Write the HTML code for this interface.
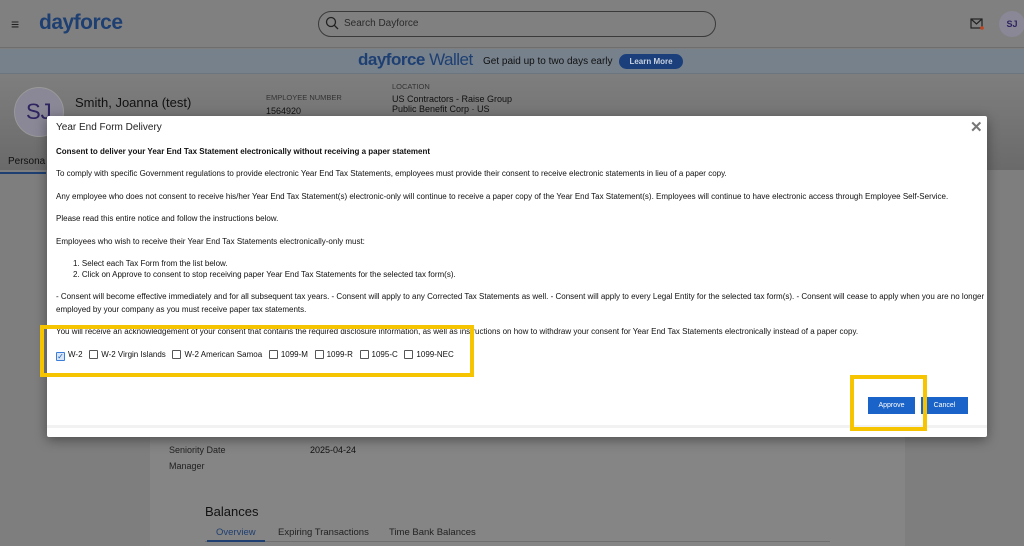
<!DOCTYPE html>
<html><head><style>
*{margin:0;padding:0;box-sizing:border-box}
body{width:1024px;height:546px;overflow:hidden;background:#7e7e7e;font-family:"Liberation Sans",sans-serif;position:relative}
.a{position:absolute;white-space:nowrap}
.m{font-size:8px;color:#111}
.cb{display:inline-block;width:9px;height:9px;border:1px solid #555;background:#fff;vertical-align:-2px;margin-right:3px;border-radius:1px}
</style></head><body>
<div class="a" style="left:0;top:0;width:1024px;height:48px;background:#808080;border-bottom:1px solid #6e6e6e"></div>
<div class="a" style="left:11px;top:16px;font-size:14px;color:#222">≡</div>
<div class="a" style="left:39px;top:11px;font-size:21px;font-weight:bold;color:#1e3f72;letter-spacing:-0.5px">dayforce</div>
<div class="a" style="left:318px;top:11px;width:398px;height:26px;border:1px solid #3a3a3a;border-radius:13px"></div>
<svg class="a" style="left:325px;top:16px" width="14" height="14" viewBox="0 0 14 14"><circle cx="6" cy="6" r="4.5" fill="none" stroke="#222" stroke-width="1.3"/><line x1="9.3" y1="9.3" x2="13" y2="13" stroke="#222" stroke-width="1.3"/></svg>
<div class="a" style="left:344px;top:18px;font-size:10px;color:#2a2a2a">Search Dayforce</div>
<svg class="a" style="left:970px;top:18px" width="14" height="12" viewBox="0 0 14 12"><rect x="1" y="1" width="11" height="9" fill="none" stroke="#222" stroke-width="1.2"/><polyline points="1,1 6.5,6 12,1" fill="none" stroke="#222" stroke-width="1.2"/><circle cx="12" cy="10" r="1.8" fill="#c0451f"/></svg>
<div class="a" style="left:999px;top:11px;width:26px;height:26px;border-radius:50%;background:#8a8796;font-size:9px;font-weight:bold;color:#2d2460;text-align:center;line-height:26px">SJ</div>
<div class="a" style="left:0;top:49px;width:1024px;height:25px;background:#76818c;border-bottom:1px solid #6a7580"></div>
<div class="a" style="left:358px;top:50px;font-size:17px;font-weight:bold;color:#1e3f72;letter-spacing:-0.5px">dayforce<span style="font-weight:normal"> Wallet</span></div>
<div class="a" style="left:483px;top:56px;font-size:10px;color:#111">Get paid up to two days early</div>
<div class="a" style="left:619px;top:54px;width:64px;height:15px;border-radius:8px;background:#1b3f7a;color:#c8d2e0;font-size:8px;font-weight:bold;text-align:center;line-height:15px">Learn More</div>
<div class="a" style="left:0;top:75px;width:1024px;height:95px;background:linear-gradient(#7e7e7e,#6a6a6a)"></div>
<div class="a" style="left:14px;top:87px;width:50px;height:50px;border-radius:50%;background:#8a8796;border:1px solid #999;font-size:22px;color:#2d2460;line-height:48px;padding-left:11px">SJ</div>
<div class="a" style="left:75px;top:95px;font-size:13px;color:#111">Smith, Joanna (test)</div>
<div class="a" style="left:266px;top:93px;font-size:7.5px;color:#333">EMPLOYEE NUMBER</div>
<div class="a" style="left:266px;top:106px;font-size:9px;color:#111">1564920</div>
<div class="a" style="left:392px;top:82px;font-size:7.5px;color:#333">LOCATION</div>
<div class="a" style="left:392px;top:94px;font-size:9px;color:#111;line-height:10px">US Contractors - Raise Group<br>Public Benefit Corp · US</div>
<div class="a" style="left:0;top:150px;width:1024px;height:1px;background:#6e6e6e"></div>
<div class="a" style="left:8px;top:156px;font-size:10px;color:#111">Persona</div>
<div class="a" style="left:0;top:172px;width:46px;height:2px;background:#1e3f72"></div>
<div class="a" style="left:150px;top:174px;width:755px;height:372px;background:#858585"></div>
<div class="a" style="left:169px;top:445px;font-size:9px;color:#222">Seniority Date</div>
<div class="a" style="left:310px;top:445px;font-size:9px;color:#111">2025-04-24</div>
<div class="a" style="left:169px;top:461px;font-size:9px;color:#222">Manager</div>
<div class="a" style="left:205px;top:504px;font-size:13px;color:#111">Balances</div>
<div class="a" style="left:216px;top:527px;font-size:9.5px;color:#1e3f72">Overview</div>
<div class="a" style="left:278px;top:527px;font-size:9.5px;color:#222">Expiring Transactions</div>
<div class="a" style="left:389px;top:527px;font-size:9.5px;color:#222">Time Bank Balances</div>
<div class="a" style="left:205px;top:541px;width:625px;height:1px;background:#6f6f6f"></div>
<div class="a" style="left:207px;top:540px;width:58px;height:2px;background:#1e3f72"></div>

<div class="a" style="left:47px;top:116px;width:940px;height:321px;background:#fff;border-radius:2px;box-shadow:0 3px 12px rgba(0,0,0,.4)"></div>
<div class="a" style="left:47px;top:425px;width:940px;height:3px;background:#f2f2f2"></div>
<div class="a" style="left:56px;top:122px;font-size:10px;color:#222">Year End Form Delivery</div>
<div class="a" style="left:970px;top:118px;font-size:15px;color:#777;font-weight:bold">✕</div>
<div class="a m" style="left:56px;top:147px;font-weight:bold">Consent to deliver your Year End Tax Statement electronically without receiving a paper statement</div>
<div class="a m" style="left:56px;top:169px">To comply with specific Government regulations to provide electronic Year End Tax Statements, employees must provide their consent to receive electronic statements in lieu of a paper copy.</div>
<div class="a m" style="left:56px;top:192px">Any employee who does not consent to receive his/her Year End Tax Statement(s) electronic-only will continue to receive a paper copy of the Year End Tax Statement(s). Employees will continue to have electronic access through Employee Self-Service.</div>
<div class="a m" style="left:56px;top:214px">Please read this entire notice and follow the instructions below.</div>
<div class="a m" style="left:56px;top:237px">Employees who wish to receive their Year End Tax Statements electronically-only must:</div>
<div class="a m" style="left:73px;top:259px">1. Select each Tax Form from the list below.</div>
<div class="a m" style="left:73px;top:270px">2. Click on Approve to consent to stop receiving paper Year End Tax Statements for the selected tax form(s).</div>
<div class="a m" style="left:56px;top:292px">- Consent will become effective immediately and for all subsequent tax years. - Consent will apply to any Corrected Tax Statements as well. - Consent will apply to every Legal Entity for the selected tax form(s). - Consent will cease to apply when you are no longer</div>
<div class="a m" style="left:56px;top:305px">employed by your company as you must receive paper tax statements.</div>
<div class="a m" style="left:56px;top:327px">You will receive an acknowledgement of your consent that contains the required disclosure information, as well as instructions on how to withdraw your consent for Year End Tax Statements electronically instead of a paper copy.</div>
<div class="a m" style="left:56px;top:350px;font-size:8px">
<span class="cb" style="border:1px solid #3b7dd8;background:#d8e6f7;color:#1d5fb8;font-size:8px;line-height:7px;text-align:center">✓</span>W-2 &nbsp;&nbsp;<span class="cb"></span>W-2 Virgin Islands &nbsp;&nbsp;<span class="cb"></span>W-2 American Samoa &nbsp;&nbsp;<span class="cb"></span>1099-M &nbsp;&nbsp;<span class="cb"></span>1099-R &nbsp;&nbsp;<span class="cb"></span>1095-C &nbsp;&nbsp;<span class="cb"></span>1099-NEC</div>
<div class="a" style="left:868px;top:397px;width:47px;height:17px;background:#1a63c8;color:#fff;font-size:7px;text-align:center;line-height:17px">Approve</div>
<div class="a" style="left:921px;top:397px;width:47px;height:17px;background:#1a63c8;color:#fff;font-size:7px;text-align:center;line-height:17px">Cancel</div>
<div class="a" style="left:40px;top:325px;width:434px;height:52px;border:4px solid #f6c400"></div>
<div class="a" style="left:850px;top:375px;width:77px;height:56px;border:4px solid #f6c400"></div>
</body></html>
